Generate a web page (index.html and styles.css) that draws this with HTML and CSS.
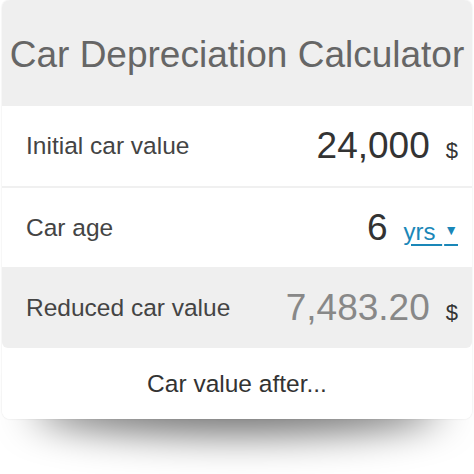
FILE: index.html
```html
<!DOCTYPE html>
<html lang="en">
<head>
<meta charset="UTF-8" />
<meta name="viewport" content="width=device-width, initial-scale=1" />
<title>Car Depreciation Calculator</title>
<link rel="stylesheet" href="styles.css">
</head>
<body>
  <div class="calc">
    <h1 class="calc-title">Car Depreciation Calculator</h1>
    <div class="calc-row">
      <span class="calc-label">Initial car value</span>
      <span class="calc-value"><span class="calc-num">24,000</span><span class="calc-unit">$</span></span>
    </div>
    <div class="calc-row calc-row-sep">
      <span class="calc-label">Car age</span>
      <span class="calc-value"><span class="calc-num">6</span><span class="calc-unit calc-link">yrs <span class="calc-caret">▼</span></span></span>
    </div>
    <div class="calc-row calc-row-result">
      <span class="calc-label">Reduced car value</span>
      <span class="calc-value"><span class="calc-num calc-num-result">7,483.20</span><span class="calc-unit">$</span></span>
    </div>
    <div class="calc-footer">Car value after...</div>
  </div>
</body>
</html>
```

FILE: styles.css
```css
html, body {
  height: 474px;
}
body {
  margin: 0;
  background: #fff;
  font-family: 'Liberation Sans', Arial, Helvetica, sans-serif;
  overflow: hidden;
}
.calc {
  position: relative;
  margin: 0 2px;
  width: 470px;
  background: #fff;
  border-radius: 8px;
  box-shadow: 0 0 2px rgba(0,0,0,0.12);
}
/* soft shadow under the card */
.calc::after {
  content: "";
  position: absolute;
  left: 30px;
  right: 30px;
  bottom: -14px;
  height: 50px;
  background: rgba(0,0,0,0.6);
  border-radius: 50%;
  filter: blur(20px);
  z-index: -1;
}
.calc-title {
  margin: 0;
  height: 106px;
  display: flex;
  align-items: center;
  justify-content: center;
  background: #efefef;
  border-radius: 8px 8px 0 0;
  color: #666;
  font-size: 37px;
  font-weight: normal;
  padding-top: 4px;
  box-sizing: border-box;
  white-space: nowrap;
}
.calc-row {
  height: 80px;
  display: flex;
  align-items: center;
  justify-content: space-between;
  padding: 0 14px 0 24px;
  box-sizing: border-box;
  background: #fff;
}
.calc-row-sep {
  border-top: 2px solid #f0f0f0;
  height: 81px;
}
.calc-row-result {
  background: #efefef;
  border-radius: 0 0 6px 6px;
  height: 81px;
}
.calc-label {
  font-size: 24.5px;
  color: #444;
}
.calc-value {
  display: flex;
  align-items: baseline;
}
.calc-num {
  font-size: 37px;
  color: #333;
}
.calc-num-result {
  color: #888;
}
.calc-unit {
  margin-left: 16px;
  font-size: 22px;
  color: #333;
}
.calc-link {
  font-size: 24px;
  color: #1a87b8;
  text-decoration: underline;
  text-underline-offset: 4px;
}
.calc-caret {
  font-size: 14px;
  position: relative;
  top: -5px;
  margin-left: 2px;
}
.calc-footer {
  height: 71px;
  display: flex;
  align-items: center;
  justify-content: center;
  font-size: 24.5px;
  color: #333;
  background: #fff;
  border-radius: 0 0 8px 8px;
}
```
